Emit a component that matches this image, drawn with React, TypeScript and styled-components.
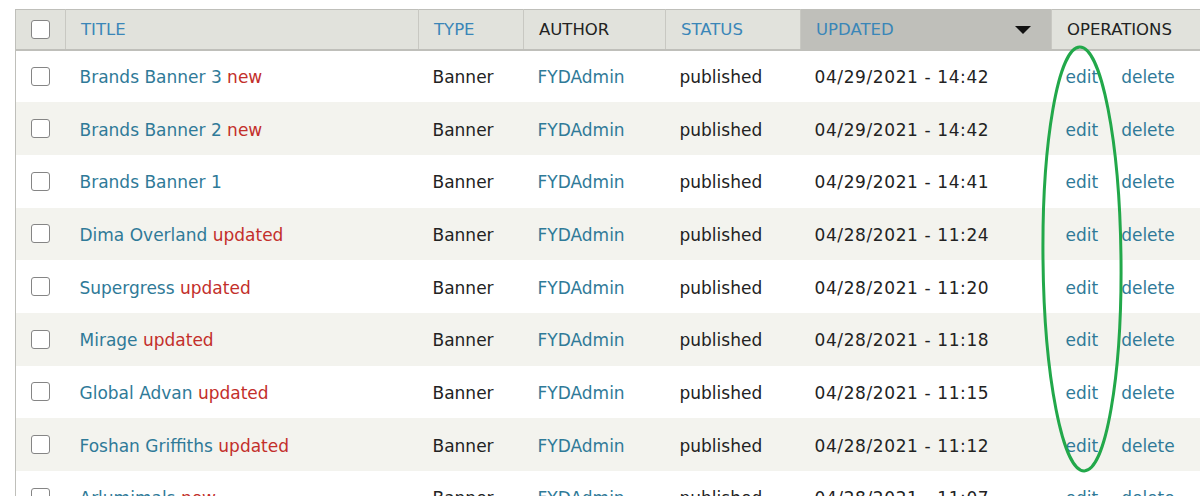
import React from "react";
import styled, { createGlobalStyle } from "styled-components";

const Global = createGlobalStyle`
  html, body { margin: 0; padding: 0; background: #fff; overflow: hidden; }
  body { font-family: "DejaVu Sans", "Liberation Sans", sans-serif; }
`;

const Page = styled.div`
  position: relative;
  width: 1200px;
  height: 496px;
  overflow: hidden;
  padding: 9px 0 0 15px;
  box-sizing: border-box;
`;

const Table = styled.table`
  border-collapse: collapse;
  table-layout: fixed;
  width: 1235px;
  border-left: 1px solid #bfbfba;
  font-size: 17px;
`;

const HeadRow = styled.tr`
  height: 40px;
  background: #e1e2dc;
  border-top: 1px solid #bfbfba;
  border-bottom: 2px solid #bfbfba;
`;

const Th = styled.th<{ $w: number; $active?: boolean; $plain?: boolean }>`
  width: ${(p) => p.$w}px;
  padding: 1px 14px 0 15px;
  text-align: left;
  font-weight: normal;
  text-transform: uppercase;
  color: ${(p) => (p.$plain ? "#222" : "#3a86b8")};
  background: ${(p) => (p.$active ? "#bfbfba" : "transparent")};
  border-left: 1px solid #c8c8c2;
  font-size: 16.5px;
  white-space: nowrap;
  box-sizing: border-box;
`;

const CheckTh = styled(Th)`
  padding: 0 0 0 15px;
  border-left: none;
`;

const SortWrap = styled.div`
  display: flex;
  align-items: center;
  justify-content: space-between;
`;

const Arrow = styled.span`
  width: 0;
  height: 0;
  border-left: 8px solid transparent;
  border-right: 8px solid transparent;
  border-top: 8px solid #111;
  margin-right: 6px;
`;

const Row = styled.tr<{ $odd: boolean }>`
  height: 52.7px;
  background: ${(p) => (p.$odd ? "#f3f3ee" : "#fff")};
`;

const Td = styled.td`
  padding: 2px 14px 0 14px;
  color: #222;
  white-space: nowrap;
  vertical-align: middle;
`;

const CheckTd = styled(Td)`
  padding: 0 0 0 15px;
`;

const Box = styled.span`
  display: block;
  width: 17px;
  height: 17px;
  border: 1px solid #858585;
  border-radius: 3px;
  background: #fff;
`;

const Link = styled.a`
  color: #2f7a98;
  text-decoration: none;
`;

const Mark = styled.span`
  color: #c32f2b;
`;

const DateText = styled.span`
  letter-spacing: 0.6px;
`;

const Ops = styled.div`
  display: flex;
  gap: 23px;
`;

const Circle = styled.svg`
  position: absolute;
  left: 0;
  top: 0;
  pointer-events: none;
`;

const rows = [
  ["Brands Banner 3", "new", "04/29/2021 - 14:42"],
  ["Brands Banner 2", "new", "04/29/2021 - 14:42"],
  ["Brands Banner 1", "", "04/29/2021 - 14:41"],
  ["Dima Overland", "updated", "04/28/2021 - 11:24"],
  ["Supergress", "updated", "04/28/2021 - 11:20"],
  ["Mirage", "updated", "04/28/2021 - 11:18"],
  ["Global Advan", "updated", "04/28/2021 - 11:15"],
  ["Foshan Griffiths", "updated", "04/28/2021 - 11:12"],
  ["Arlumimals", "new", "04/28/2021 - 11:07"],
];

export default function App() {
  return (
    <Page>
      <Global />
      <Table>
        <thead>
          <HeadRow>
            <CheckTh $w={50}>
              <Box />
            </CheckTh>
            <Th $w={353}>Title</Th>
            <Th $w={105}>Type</Th>
            <Th $w={142} $plain>
              Author
            </Th>
            <Th $w={135}>Status</Th>
            <Th $w={251} $active>
              <SortWrap>
                Updated
                <Arrow />
              </SortWrap>
            </Th>
            <Th $w={199} $plain>
              Operations
            </Th>
          </HeadRow>
        </thead>
        <tbody>
          {rows.map(([title, mark, date], i) => (
            <Row key={i} $odd={i % 2 === 1}>
              <CheckTd>
                <Box />
              </CheckTd>
              <Td>
                <Link>{title}</Link>
                {mark ? <Mark> {mark}</Mark> : null}
              </Td>
              <Td>Banner</Td>
              <Td>
                <Link>FYDAdmin</Link>
              </Td>
              <Td>published</Td>
              <Td>
                <DateText>{date}</DateText>
              </Td>
              <Td>
                <Ops>
                  <Link>edit</Link>
                  <Link>delete</Link>
                </Ops>
              </Td>
            </Row>
          ))}
        </tbody>
      </Table>
      <Circle width="1200" height="496" viewBox="0 0 1200 496">
        <ellipse cx="1082" cy="259" rx="39" ry="212" fill="none" stroke="#22a84a" strokeWidth="3" transform="rotate(-0.6 1082 259)" />
      </Circle>
    </Page>
  );
}
